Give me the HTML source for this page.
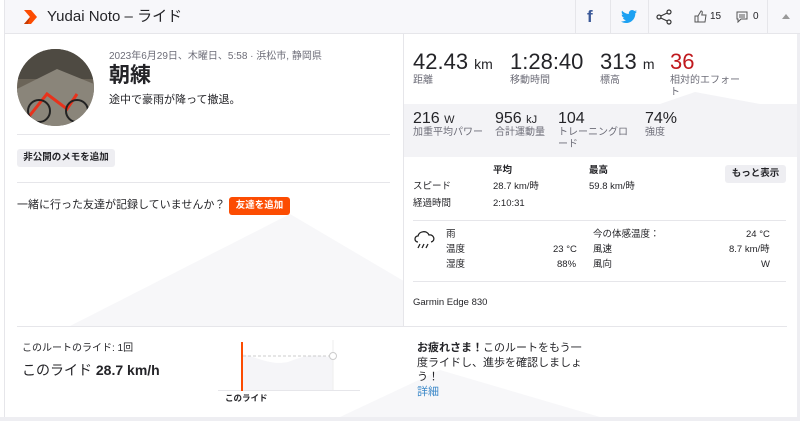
<!DOCTYPE html>
<html><head><meta charset="utf-8"><style>
*{margin:0;padding:0;box-sizing:border-box}
body{width:800px;height:421px;overflow:hidden;background:#fff;font-family:"Liberation Sans","Noto Sans CJK JP",sans-serif;color:#242428;position:relative;line-height:1.2}
.a{position:absolute;white-space:nowrap}
.hdr{position:absolute;left:5px;top:0;width:795px;height:34px;background:#f7f7fa;border-bottom:1px solid #e6e6ea}
.sep{position:absolute;top:0;width:1px;height:33px;background:#e6e6ea}
.g{color:#6d6d78}
.big{font-size:22px;color:#242428}
.big small{font-size:14px}
.lbl{font-size:10px;color:#6d6d78;line-height:12px}
.mid{font-size:16px}
.mid small{font-size:11px}
.t{font-size:9.5px}
</style></head><body>
<div style="position:absolute;left:4px;top:0;width:1px;height:421px;background:#e6e6ea"></div>
<div class="hdr">
<svg class="a" style="left:18px;top:9px" width="16" height="16" viewBox="0 0 16 16"><path d="M1 1h7l6 7-6 7H1l6-7z" fill="#fc4c02"/><path d="M7 8l-6 7h4z" fill="#c73a00"/></svg>
<div class="a" style="left:42px;top:8px;font-size:15px;line-height:18px;color:#242428">Yudai Noto – ライド</div>
<div class="sep" style="left:570px"></div><div class="sep" style="left:605px"></div><div class="sep" style="left:643px"></div><div class="sep" style="left:762px"></div>
<div class="a" style="left:582px;top:7px;font-size:17px;font-weight:bold;color:#3b5998">f</div>
<svg class="a" style="left:616px;top:10px" width="16" height="13" viewBox="0 0 16 13"><path d="M16 1.5c-.6.3-1.2.4-1.9.5.7-.4 1.2-1 1.4-1.8-.6.4-1.3.6-2.100.8C12.8.4 12 0 11.1 0 9.3 0 7.8 1.5 7.8 3.3c0 .3 0 .5.1.7C5.2 3.9 2.7 2.6 1.1.6.8 1.100.7 1.600.7 2.2c0 1.1.6 2.1 1.5 2.7-.5 0-1-.2-1.500-.4 0 1.6 1.100 2.9 2.600 3.2-.5.1-1 .2-1.500.1.4 1.3 1.600 2.300 3.100 2.300-1.100.9-2.600 1.400-4.100 1.400H0c1.5.9 3.2 1.5 5 1.5 6 0 9.3-5 9.3-9.3v-.4c.7-.5 1.2-1.1 1.7-1.800z" fill="#1da1f2"/></svg>
<svg class="a" style="left:651px;top:9px" width="16" height="16" viewBox="0 0 16 16" fill="none" stroke="#333" stroke-width="1.2"><circle cx="3" cy="8" r="2"/><circle cx="13" cy="3" r="2"/><circle cx="13" cy="13" r="2"/><path d="M4.8 7l6.4-3M4.8 9l6.4 3"/></svg>
<svg class="a" style="left:689px;top:10px" width="13" height="13" viewBox="0 0 13 13" fill="none" stroke="#555" stroke-width="1"><path d="M1 6h3v6H1zM4 6l3-5c1 0 1.5.7 1.2 2L7.8 5H12l-1 7H4"/></svg>
<div class="a" style="left:705px;top:11px;font-size:10px">15</div>
<svg class="a" style="left:731px;top:11px" width="12" height="12" viewBox="0 0 12 12" fill="none" stroke="#555" stroke-width="1"><path d="M1 1h10v7H5l-3 3V8H1z"/><path d="M3 4h6M3 6h6"/></svg>
<div class="a" style="left:748px;top:11px;font-size:10px">0</div>
<div class="a" style="left:777px;top:14px;width:0;height:0;border-left:4px solid transparent;border-right:4px solid transparent;border-bottom:5px solid #999"></div>
</div>
<svg class="a" style="left:0;top:34px" width="800" height="387"><path d="M70 292L290 180 480 292z" fill="#f7f7f9"/><path d="M660 70L695 58 760 70z" fill="#f3f3f6"/></svg>
<div class="a" style="left:403px;top:34px;width:1px;height:292px;background:#e6e6ea"></div>
<div class="a" style="left:404px;top:104px;width:393px;height:53px;background:#f3f3f6"></div>
<div class="a" style="left:404px;top:157px;width:393px;height:169px;background:#fff"></div>
<svg class="a" style="left:17px;top:49px" width="77" height="77"><defs><clipPath id="c"><circle cx="38.5" cy="38.5" r="38.5"/></clipPath></defs><g clip-path="url(#c)"><rect width="77" height="77" fill="#6b6458"/><rect y="0" width="77" height="30" fill="#4e4a42"/><path d="M0 40L40 20 77 35V77H0z" fill="#8a857a"/><path d="M10 70L30 45 50 60 60 45" stroke="#e8321c" stroke-width="3" fill="none"/><circle cx="22" cy="62" r="11" stroke="#222" stroke-width="2" fill="none"/><circle cx="60" cy="62" r="11" stroke="#222" stroke-width="2" fill="none"/></g></svg>
<div class="a g" style="left:109px;top:51px;font-size:10px">2023年6月29日、木曜日、5:58 · 浜松市, 静岡県</div>
<div class="a" style="left:109px;top:63px;font-size:21px;font-weight:bold">朝練</div>
<div class="a" style="left:109px;top:94px;font-size:11px">途中で豪雨が降って撤退。</div>
<div class="a" style="left:17px;top:134px;width:373px;height:1px;background:#e6e6ea"></div>
<div class="a" style="left:17px;top:149px;width:98px;height:18px;background:#eeeef2;border-radius:3px;font-size:9.5px;font-weight:bold;text-align:center;line-height:18px">非公開のメモを追加</div>
<div class="a" style="left:17px;top:182px;width:373px;height:1px;background:#e6e6ea"></div>
<div class="a" style="left:17px;top:199px;font-size:11px">一緒に行った友達が記録していませんか？</div>
<div class="a" style="left:229px;top:197px;width:61px;height:18px;background:#fc4c02;border-radius:3px;color:#fff;font-size:9.5px;font-weight:bold;text-align:center;line-height:18px">友達を追加</div>
<div class="a" style="left:17px;top:326px;width:770px;height:1px;background:#e6e6ea"></div>
<div class="a" style="left:17px;top:327px;width:780px;height:90px;background:#fff"></div>
<svg class="a" style="left:340px;top:370px" width="260" height="47"><path d="M0 47L100 0 260 47z" fill="#f7f7f9"/></svg>
<div class="a" style="left:22px;top:343px;font-size:10px">このルートのライド: 1回</div>
<div class="a" style="left:22px;top:362px;font-size:14px"><span>このライド </span><b>28.7 km/h</b></div>
<svg class="a" style="left:218px;top:340px" width="142" height="52"><path d="M25 14C45 20 55 25 70 22 90 14 100 14 115 18V50H25z" fill="#f5f5f8"/><path d="M25 16H115" stroke="#ccc" stroke-dasharray="3 2"/><line x1="115" y1="0" x2="115" y2="50" stroke="#eee"/><circle cx="115" cy="16" r="3.5" fill="#fff" stroke="#ccc"/><line x1="0" y1="50.5" x2="142" y2="50.5" stroke="#e6e6ea"/><rect x="23" y="2" width="2" height="49" fill="#fc4c02"/></svg>
<div class="a" style="left:225px;top:393px;font-size:8.5px;font-weight:bold">このライド</div>
<div class="a" style="left:417px;top:341px;font-size:11px;line-height:14.5px;white-space:normal;width:170px"><b>お疲れさま！</b>このルートをもう一度ライドし、進歩を確認しましょう！<br><span style="color:#3a87c8">詳細</span></div>
<div class="a" style="left:0;top:417px;width:800px;height:4px;background:#eeeef2"></div>
<div class="a" style="left:797px;top:34px;width:3px;height:383px;background:#eeeef2"></div>
<div class="a big" style="left:413px;top:49px">42.43 <small>km</small></div>
<div class="a lbl" style="left:413px;top:75px">距離</div>
<div class="a big" style="left:510px;top:49px">1:28:40</div>
<div class="a lbl" style="left:510px;top:75px">移動時間</div>
<div class="a big" style="left:600px;top:49px">313 <small>m</small></div>
<div class="a lbl" style="left:600px;top:75px">標高</div>
<div class="a big" style="left:670px;top:49px;color:#c0191e">36</div>
<div class="a lbl" style="left:670px;top:75px">相対的エフォー<br>ト</div>
<div class="a mid" style="left:413px;top:109px">216 <small>W</small></div>
<div class="a lbl" style="left:413px;top:127px">加重平均パワー</div>
<div class="a mid" style="left:495px;top:109px">956 <small>kJ</small></div>
<div class="a lbl" style="left:495px;top:127px">合計運動量</div>
<div class="a mid" style="left:558px;top:109px">104</div>
<div class="a lbl" style="left:558px;top:127px">トレーニングロ<br>ード</div>
<div class="a mid" style="left:645px;top:109px">74%</div>
<div class="a lbl" style="left:645px;top:127px">強度</div>
<div class="a t" style="left:493px;top:165px;font-weight:bold">平均</div>
<div class="a t" style="left:589px;top:165px;font-weight:bold">最高</div>
<div class="a" style="left:725px;top:165px;width:61px;height:18px;background:#eeeef2;border-radius:3px;font-size:9.5px;font-weight:bold;text-align:center;line-height:18px">もっと表示</div>
<div class="a t" style="left:413px;top:181px">スピード</div>
<div class="a t" style="left:493px;top:181px">28.7 km/時</div>
<div class="a t" style="left:589px;top:181px">59.8 km/時</div>
<div class="a t" style="left:413px;top:198px">経過時間</div>
<div class="a t" style="left:493px;top:198px">2:10:31</div>
<div class="a" style="left:413px;top:220px;width:373px;height:1px;background:#e6e6ea"></div>
<svg class="a" style="left:413px;top:230px" width="24" height="20" viewBox="0 0 24 20" fill="none" stroke="#222" stroke-width="1.3"><path d="M5 12C1 12 1 6 5 6 6 1 14 0 16 5 21 4 23 11 18 12"/><path d="M7 14l-2 4M11 14l-2 4M15 14l-2 4"/></svg>
<div class="a t" style="left:446px;top:229px">雨</div>
<div class="a t" style="left:446px;top:244px">温度</div>
<div class="a t" style="left:446px;top:259px">湿度</div>
<div class="a t" style="left:553px;top:244px">23 °C</div>
<div class="a t" style="left:557px;top:259px">88%</div>
<div class="a t" style="left:593px;top:229px">今の体感温度：</div>
<div class="a t" style="left:593px;top:244px">風速</div>
<div class="a t" style="left:593px;top:259px">風向</div>
<div class="a t" style="left:746px;top:229px">24 °C</div>
<div class="a t" style="left:729px;top:244px">8.7 km/時</div>
<div class="a t" style="left:761px;top:259px">W</div>
<div class="a" style="left:413px;top:281px;width:373px;height:1px;background:#e6e6ea"></div>
<div class="a t" style="left:413px;top:297px">Garmin Edge 830</div>
</body></html>
